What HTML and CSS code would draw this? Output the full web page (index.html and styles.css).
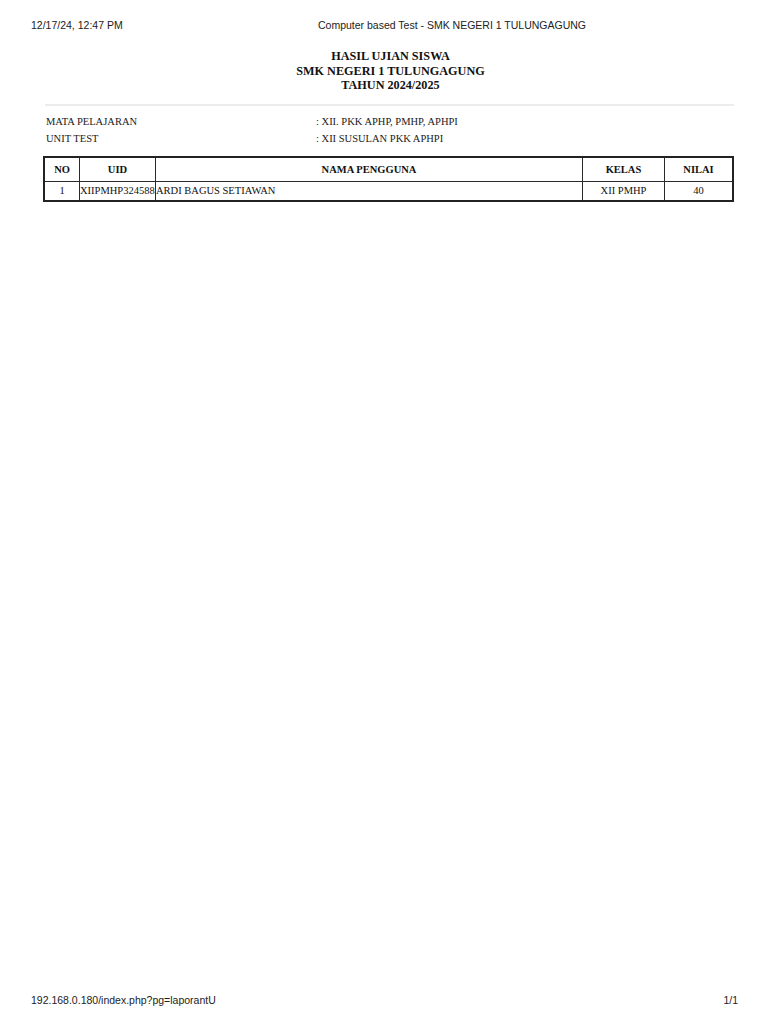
FILE: index.html
```html
<!DOCTYPE html>
<html>
<head>
<meta charset="utf-8">
<title>Computer based Test - SMK NEGERI 1 TULUNGAGUNG</title>
<link rel="stylesheet" href="styles.css">
</head>
<body>
<div class="page">
  <div class="print-head">
    <span class="ph-date">12/17/24, 12:47 PM</span>
    <span class="ph-title">Computer based Test - SMK NEGERI 1 TULUNGAGUNG</span>
  </div>
  <div class="content">
    <div class="title">
      <div>HASIL UJIAN SISWA</div>
      <div>SMK NEGERI 1 TULUNGAGUNG</div>
      <div>TAHUN 2024/2025</div>
    </div>
    <hr class="rule">
    <div class="info">
      <div class="info-row"><span class="info-label">MATA PELAJARAN</span><span class="info-val">: XII. PKK APHP, PMHP, APHPI</span></div>
      <div class="info-row"><span class="info-label">UNIT TEST</span><span class="info-val">: XII SUSULAN PKK APHPI</span></div>
    </div>
    <table class="result">
      <thead>
        <tr>
          <th class="c-no">NO</th>
          <th class="c-uid">UID</th>
          <th class="c-nama">NAMA PENGGUNA</th>
          <th class="c-kelas">KELAS</th>
          <th class="c-nilai">NILAI</th>
        </tr>
      </thead>
      <tbody>
        <tr>
          <td class="center">1</td>
          <td>XIIPMHP324588</td>
          <td>ARDI BAGUS SETIAWAN</td>
          <td class="center">XII PMHP</td>
          <td class="center">40</td>
        </tr>
      </tbody>
    </table>
  </div>
  <div class="grow"></div>
  <div class="print-foot">
    <span>192.168.0.180/index.php?pg=laporantU</span>
    <span>1/1</span>
  </div>
</div>
</body>
</html>
```
FILE: styles.css
```css
html, body {
  margin: 0;
  padding: 0;
  background: #fff;
}
.page {
  width: 768px;
  height: 1024px;
  display: flex;
  flex-direction: column;
  color: #111;
}
.print-head {
  display: flex;
  align-items: center;
  padding: 18px 30px 0 31px;
  height: 14px;
  font-family: "Liberation Sans", Arial, sans-serif;
  font-size: 10.5px;
  color: #222;
}
.ph-date {
  width: 160px;
}
.ph-title {
  margin-left: 127px;
}
.content {
  padding: 0 34px 0 43px;
  font-family: "Liberation Serif", "Times New Roman", serif;
}
.title {
  margin-top: 17px;
  text-align: center;
  font-weight: bold;
  font-size: 12.2px;
  line-height: 14.5px;
  padding-left: 4px;
}
.rule {
  margin: 11px 0 0 2px;
  border: 0;
  border-top: 2px solid #ececec;
  height: 0;
}
.info {
  margin-top: 7px;
  font-size: 10.5px;
  line-height: 17px;
  color: #1a1a1a;
}
.info-row {
  display: flex;
  padding-left: 3px;
}
.info-label {
  width: 270px;
}
.result {
  margin-top: 9px;
  width: 691px;
  border-collapse: collapse;
  border: 2px solid #222;
  font-size: 10.5px;
  color: #111;
}
.result th, .result td {
  border: 1.5px solid #2a2a2a;
  padding: 0;
}
.result th {
  height: 23px;
  font-weight: bold;
  text-align: center;
}
.result td {
  height: 18px;
  text-align: left;
}
.result td.center {
  text-align: center;
}
.c-no { width: 34px; }
.c-uid { width: 75px; }
.c-kelas { width: 81px; }
.c-nilai { width: 67px; }
.grow {
  flex: 1;
}
.print-foot {
  display: flex;
  justify-content: space-between;
  padding: 0 30px 18px 31px;
  font-family: "Liberation Sans", Arial, sans-serif;
  font-size: 10.5px;
  color: #222;
}
```
